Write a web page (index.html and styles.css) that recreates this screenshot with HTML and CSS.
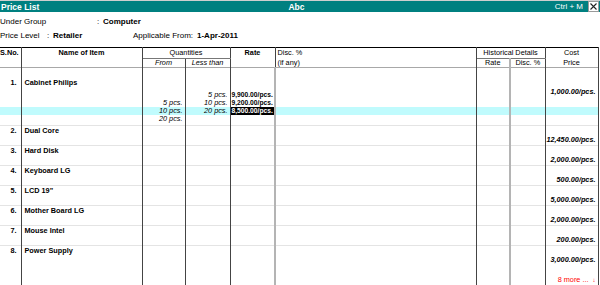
FILE: index.html
```html
<!DOCTYPE html>
<html lang="en">
<head>
  <meta charset="UTF-8">
  <title>Price List</title>
  <link rel="stylesheet" href="styles.css">
</head>
<body>
  <div class="titlebar">
    <span class="title">Price List</span>
    <span class="company">Abc</span>
    <span class="right">
      <span class="shortcut">Ctrl + M</span>
      <span class="close">
        <svg width="9" height="9" viewBox="0 0 9 9"><path d="M1.5 1.5 L7.5 7.5 M7.5 1.5 L1.5 7.5" stroke="#222" stroke-width="1.1"/></svg>
      </span>
    </span>
  </div>

  <div class="info">
    <div class="info-row">
      <span class="w-group">Under Group</span><span class="colon">:</span><b>Computer</b>
    </div>
    <div class="info-row">
      <span class="w-level">Price Level</span><span class="colon">:</span><b class="w-retail">Retailer</b><span class="w-appl">Applicable From:</span><b>1-Apr-2011</b>
    </div>
  </div>

  <table class="price-table">
    <colgroup>
      <col style="width:21px"><col style="width:121px"><col style="width:43px"><col style="width:45px"><col style="width:45px">
      <col style="width:201px"><col style="width:34px"><col style="width:35px"><col style="width:53px">
    </colgroup>
    <thead>
      <tr class="h1">
        <th rowspan="2" class="h-sno">S.No.</th>
        <th rowspan="2" class="h-name">Name of Item</th>
        <th colspan="2" class="h-group">Quantities</th>
        <th rowspan="2" class="h-rate">Rate</th>
        <th class="h-disc">Disc. %</th>
        <th colspan="2" class="h-group">Historical Details</th>
        <th class="h-cost">Cost</th>
      </tr>
      <tr class="h2">
        <th class="h-sub">From</th>
        <th class="h-sub">Less than</th>
        <th class="h-disc">(if any)</th>
        <th class="h-hist thick">Rate</th>
        <th class="h-hist">Disc. %</th>
        <th class="h-cost">Price</th>
      </tr>
    </thead>
    <tbody>
      <tr class="r-name"><td>1.</td><td>Cabinet Philips</td><td></td><td></td><td></td><td></td><td></td><td></td><td></td></tr>
      <tr class="r-q1"><td></td><td></td><td></td><td>5 pcs.</td><td>9,900.00/pcs.</td><td></td><td></td><td></td><td class="cost-top">1,000.00/pcs.</td></tr>
      <tr class="r-q"><td></td><td></td><td>5 pcs.</td><td>10 pcs.</td><td>9,200.00/pcs.</td><td></td><td></td><td></td><td></td></tr>
      <tr class="r-q sel"><td></td><td></td><td>10 pcs.</td><td>20 pcs.</td><td class="cur">8,500.00/pcs.</td><td></td><td></td><td></td><td></td></tr>
      <tr class="r-qlast"><td></td><td></td><td>20 pcs.</td><td></td><td></td><td></td><td></td><td></td><td></td></tr>
      <tr class="item"><td>2.</td><td>Dual Core</td><td></td><td></td><td></td><td></td><td></td><td></td><td>12,450.00/pcs.</td></tr>
      <tr class="item"><td>3.</td><td>Hard Disk</td><td></td><td></td><td></td><td></td><td></td><td></td><td>2,000.00/pcs.</td></tr>
      <tr class="item"><td>4.</td><td>Keyboard LG</td><td></td><td></td><td></td><td></td><td></td><td></td><td>500.00/pcs.</td></tr>
      <tr class="item"><td>5.</td><td>LCD 19"</td><td></td><td></td><td></td><td></td><td></td><td></td><td>5,000.00/pcs.</td></tr>
      <tr class="item"><td>6.</td><td>Mother Board LG</td><td></td><td></td><td></td><td></td><td></td><td></td><td>2,000.00/pcs.</td></tr>
      <tr class="item"><td>7.</td><td>Mouse Intel</td><td></td><td></td><td></td><td></td><td></td><td></td><td>200.00/pcs.</td></tr>
      <tr class="item last"><td>8.</td><td>Power Supply</td><td></td><td></td><td></td><td></td><td></td><td></td>
        <td>3,000.00/pcs.<div class="more">8 more ... <span class="arrow">&#8595;</span></div></td></tr>
    </tbody>
  </table>
</body>
</html>
```

FILE: styles.css
```css
body {
  margin: 0;
  background: #fff;
  color: #000;
  font-family: "Liberation Sans", Arial, sans-serif;
  font-size: 7.3px;
}

.titlebar {
  display: grid;
  grid-template-columns: 1fr auto 1fr;
  align-items: center;
  height: 11px;
  border-top: 1px solid #cfcfcf;
  background: #008080;
  color: #fff;
  font-size: 8.5px;
  padding-left: 1px;
}

.title {
  font-weight: bold;
}

.company {
  font-weight: bold;
  margin-right: 8px;
}

.right {
  display: flex;
  justify-content: flex-end;
  align-items: center;
}

.shortcut {
  font-size: 8px;
  margin-right: 5px;
}

.close {
  display: flex;
  width: 9px;
  height: 9px;
  background: #fff;
  border: 1px solid #9a9a9a;
  margin-right: 1px;
}

.info {
  padding: 5px 0 6px 0;
  font-size: 8px;
  display: flex;
  flex-direction: column;
  gap: 4px;
}

.info-row {
  display: flex;
  line-height: 10px;
  height: 10px;
}

.w-group { width: 97px; }
.w-level { width: 47px; }
.colon { width: 6px; }
.w-retail { width: 80px; }
.w-appl { width: 64px; }

.price-table {
  width: 598px;
  table-layout: fixed;
  border-collapse: collapse;
  border-top: 1px solid #000;
}

.price-table th {
  padding: 0;
  font-weight: normal;
  text-align: center;
  vertical-align: top;
  white-space: nowrap;
  overflow: hidden;
  border-right: 1px solid #444;
}

.h1 th { height: 10px; line-height: 10px; }
.h2 th { height: 8px; line-height: 8px; }
.h2 { border-bottom: 1px solid #a8a8a8; }

.h-sno { text-align: left !important; font-weight: bold !important; }
.h-name, .h-rate { font-weight: bold !important; }
.h-group { border-bottom: 1px solid #777; }
.h-sub { font-style: italic; }
.h-disc { text-align: left !important; padding-left: 2px !important; }
.h-hist.thick { border-right: 2px solid #b4b4b4 !important; }

.price-table td {
  padding: 0;
  white-space: nowrap;
  overflow: hidden;
  vertical-align: top;
  line-height: 8px;
  border-right: 1px solid #444;
}

.price-table td:nth-child(1) { text-align: right; font-weight: bold; padding-right: 4px; }
.price-table td:nth-child(2) { font-weight: bold; padding-left: 3px; }
.price-table td:nth-child(3),
.price-table td:nth-child(4) { text-align: right; font-style: italic; padding-right: 2px; }
.price-table td:nth-child(5) { font-weight: bold; font-size: 6.7px; padding-left: 1px; border-right: 2px solid #b4b4b4; }
.price-table td:nth-child(7) { border-right: 2px solid #b4b4b4; }
.price-table td:nth-child(9) { text-align: right; font-weight: bold; font-style: italic; padding-right: 2px; }

.r-name td { height: 19px; vertical-align: bottom; line-height: 9px; }
.r-q1 td { height: 12px; vertical-align: bottom; }
.r-q1 td.cost-top { vertical-align: top; line-height: 10px; }
.r-q td { height: 8px; vertical-align: middle; }
.r-qlast td { height: 10px; }
.r-qlast { border-bottom: 1px solid #e4e4e4; }

.sel td { background: #c0fbfd; }
.sel td.cur { background: #000; color: #fff; }

.item { border-bottom: 1px solid #e4e4e4; }
.item td { height: 19px; line-height: 10px; }
.item td:nth-child(9) { padding-top: 9px; height: 10px; }

.item.last { border-bottom: 1px solid #777; }
.item.last td { height: 38px; }
.item.last td:nth-child(9) { height: 29px; }

.more {
  margin-top: 10px;
  color: #f00;
  font-style: normal;
  font-weight: normal;
}

.arrow {
  font-size: 6px;
  margin-left: 2px;
}
```
